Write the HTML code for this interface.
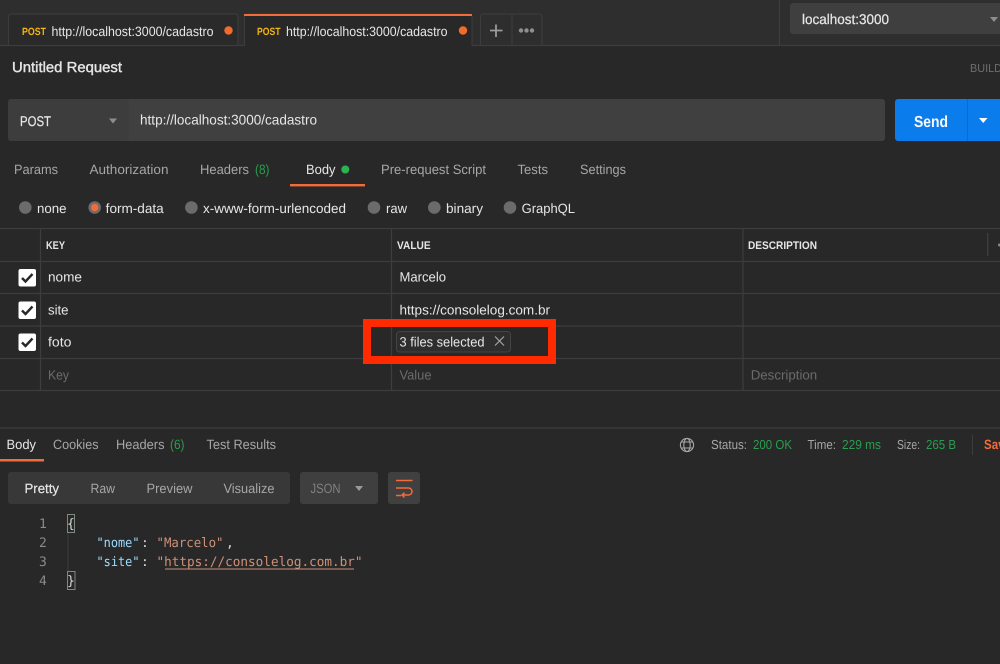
<!DOCTYPE html>
<html><head><meta charset="utf-8"><title>Postman</title>
<style>
html,body{margin:0;padding:0;background:#282828;width:1000px;height:664px;overflow:hidden}
svg{display:block;text-rendering:geometricPrecision}
text{font-family:"Liberation Sans",sans-serif;font-size:13.5px;fill:#a6a6a6;white-space:pre}
.w{fill:#e6e6e6}
.s{stroke:#e6e6e6;stroke-width:.25}
.g{fill:#2a9d4f}
.p{fill:#6b6b6b}
.b{font-weight:bold}
.m{font-family:"DejaVu Sans Mono",monospace;font-size:13px}
.l{stroke:#3d3d3d;stroke-width:1.2;fill:none}
</style></head><body>
<svg width="1000" height="664" viewBox="0 0 1000 664" xmlns="http://www.w3.org/2000/svg">
<rect width="1000" height="664" fill="#282828"/>
<rect width="1000" height="45" fill="#2e2e2e"/>
<path class="l" d="M0 45.5H244M472 45.5H1000M779.5 0V45"/>
<!-- tabs -->
<path d="M8.5 45V17q0-3 3-3H235q3 0 3 3V45" fill="#2a2a2a" stroke="#3d3d3d"/>
<path d="M244.5 46V17q0-3 3-3H469q3 0 3 3V46" fill="#282828" stroke="#3d3d3d"/>
<rect x="244" y="14" width="228" height="2" fill="#f26b3a"/>
<path d="M480.5 45V17q0-3 3-3H539q3 0 3 3V45M512 14V45" fill="#2e2e2e" stroke="#3d3d3d"/>
<text x="22" y="35" textLength="24" lengthAdjust="spacingAndGlyphs" class="b" style="font-size:10.5px;fill:#f6b50e">POST</text>
<text x="51.5" y="36" textLength="162" lengthAdjust="spacingAndGlyphs" class="w">http://localhost:3000/cadastro</text>
<circle cx="228.5" cy="30.5" r="4.2" fill="#f26b2a"/>
<text x="257" y="35" textLength="23.5" lengthAdjust="spacingAndGlyphs" class="b" style="font-size:10.5px;fill:#f6b50e">POST</text>
<text x="286" y="36" textLength="161.5" lengthAdjust="spacingAndGlyphs" class="w">http://localhost:3000/cadastro</text>
<circle cx="463" cy="30.5" r="4.2" fill="#f26b2a"/>
<path d="M496 24.5V37M490 30.5H502.5" stroke="#9a9a9a" stroke-width="1.8"/>
<g fill="#8f8f8f"><circle cx="521" cy="30.5" r="2.2"/><circle cx="526.5" cy="30.5" r="2.2"/><circle cx="532" cy="30.5" r="2.2"/></g>
<!-- env -->
<rect x="790" y="3" width="215" height="31" rx="3" fill="#3f3f3f"/>
<text x="802" y="24" textLength="87" lengthAdjust="spacingAndGlyphs" class="w s" style="font-size:14px">localhost:3000</text>
<path d="M990 17H998L994 22Z" fill="#8d8d8d"/>
<text x="970" y="72" textLength="32" lengthAdjust="spacingAndGlyphs" style="font-size:11.5px;fill:#6e6e6e">BUILD</text>
<text x="12" y="72" textLength="110" lengthAdjust="spacingAndGlyphs" class="w s" style="font-size:14.5px;stroke-width:.4">Untitled Request</text>
<!-- url bar -->
<rect x="8" y="99" width="877" height="42" rx="3" fill="#404040"/>
<rect x="8" y="99" width="121" height="42" rx="3" fill="#3d3d3d"/>
<text x="20" y="126" textLength="31" lengthAdjust="spacingAndGlyphs" class="w s" style="font-size:14px">POST</text>
<path d="M109 118.5H117L113 123.5Z" fill="#8d8d8d"/>
<text x="140" y="124.5" textLength="177" lengthAdjust="spacingAndGlyphs" class="w" style="font-size:14px">http://localhost:3000/cadastro</text>
<rect x="895" y="99" width="110" height="42" rx="3" fill="#0a7cec"/>
<rect x="967" y="99" width="1" height="42" fill="#0a6cd0"/>
<text x="914" y="127" textLength="34" lengthAdjust="spacingAndGlyphs" class="b" style="font-size:16px;fill:#f5f9ff">Send</text>
<path d="M979 118H987.5L983.2 123Z" fill="#fff"/>
<!-- request tabs -->
<text x="14" y="174" textLength="44" lengthAdjust="spacingAndGlyphs">Params</text>
<text x="89.5" y="174" textLength="79" lengthAdjust="spacingAndGlyphs">Authorization</text>
<text x="200" y="174" textLength="49" lengthAdjust="spacingAndGlyphs">Headers</text>
<text x="255" y="174" textLength="14.5" lengthAdjust="spacingAndGlyphs" class="g">(8)</text>
<text x="306" y="174" textLength="29.5" lengthAdjust="spacingAndGlyphs" class="w">Body</text>
<circle cx="345.3" cy="169.5" r="4" fill="#2cb34f"/>
<rect x="290" y="184" width="75" height="2.4" fill="#f26b3a"/>
<text x="381" y="174" textLength="105" lengthAdjust="spacingAndGlyphs">Pre-request Script</text>
<text x="517.5" y="174" textLength="30.5" lengthAdjust="spacingAndGlyphs">Tests</text>
<text x="580" y="174" textLength="46" lengthAdjust="spacingAndGlyphs">Settings</text>
<!-- radios -->
<g fill="#6b6b6b">
<circle cx="25.3" cy="207.5" r="6.3"/><circle cx="94.7" cy="207.5" r="6.3"/><circle cx="191.4" cy="207.5" r="6.3"/><circle cx="374" cy="207.5" r="6.3"/><circle cx="434.3" cy="207.5" r="6.3"/><circle cx="510" cy="207.5" r="6.3"/>
</g>
<circle cx="94.7" cy="207.5" r="3.7" fill="#f26b3a"/>
<text x="37" y="213" textLength="29.5" lengthAdjust="spacingAndGlyphs" class="w">none</text>
<text x="105.7" y="213" textLength="58" lengthAdjust="spacingAndGlyphs" class="w">form-data</text>
<text x="203" y="213" textLength="143" lengthAdjust="spacingAndGlyphs" class="w">x-www-form-urlencoded</text>
<text x="386" y="213" textLength="21" lengthAdjust="spacingAndGlyphs" class="w">raw</text>
<text x="446" y="213" textLength="37" lengthAdjust="spacingAndGlyphs" class="w">binary</text>
<text x="521.6" y="213" textLength="53.4" lengthAdjust="spacingAndGlyphs" class="w">GraphQL</text>
<!-- table -->
<path class="l" d="M0 228.5H1000M0 261.5H1000M0 293.5H1000M0 326H1000M0 358.5H1000M0 390.5H1000M40.5 229V390M391.5 229V390M743 229V390"/>
<rect x="987" y="233" width="1.4" height="23" fill="#3d3d3d"/>
<circle cx="999.5" cy="245" r="1.5" fill="#8a8a8a"/>
<text x="46" y="249" textLength="19" lengthAdjust="spacingAndGlyphs" class="b w" style="font-size:11px">KEY</text>
<text x="397" y="249" textLength="33.6" lengthAdjust="spacingAndGlyphs" class="b w" style="font-size:11px">VALUE</text>
<text x="748" y="249" textLength="69" lengthAdjust="spacingAndGlyphs" class="b w" style="font-size:11px">DESCRIPTION</text>
<g>
<rect x="18.5" y="269" width="17.5" height="17.5" rx="2" fill="#fff"/>
<path d="M22 278L25.5 281.5L32.5 274" fill="none" stroke="#282828" stroke-width="2.4"/>
<rect x="18.5" y="301.5" width="17.5" height="17.5" rx="2" fill="#fff"/>
<path d="M22 310.5L25.5 314L32.5 306.5" fill="none" stroke="#282828" stroke-width="2.4"/>
<rect x="18.5" y="333.5" width="17.5" height="17.5" rx="2" fill="#fff"/>
<path d="M22 342.5L25.5 346L32.5 338.5" fill="none" stroke="#282828" stroke-width="2.4"/>
</g>
<text x="48" y="281.5" textLength="34" lengthAdjust="spacingAndGlyphs" class="w">nome</text>
<text x="399.5" y="281.5" textLength="46.5" lengthAdjust="spacingAndGlyphs" class="w">Marcelo</text>
<text x="48" y="314.5" textLength="20.5" lengthAdjust="spacingAndGlyphs" class="w">site</text>
<text x="399.5" y="314.5" textLength="150.5" lengthAdjust="spacingAndGlyphs" class="w">https://consolelog.com.br</text>
<text x="48" y="346.5" textLength="23.4" lengthAdjust="spacingAndGlyphs" class="w">foto</text>
<rect x="396.5" y="331.5" width="114" height="20.5" rx="3" fill="#2e2e2e" stroke="#444"/>
<text x="399.5" y="346.5" textLength="85" lengthAdjust="spacingAndGlyphs" class="w">3 files selected</text>
<path d="M495 336.5L504 345.5M504 336.5L495 345.5" stroke="#a6a6a6" stroke-width="1.2"/>
<text x="48" y="379.5" textLength="21" lengthAdjust="spacingAndGlyphs" class="p">Key</text>
<text x="399.5" y="379.5" textLength="32" lengthAdjust="spacingAndGlyphs" class="p">Value</text>
<text x="750.7" y="379.5" textLength="66.5" lengthAdjust="spacingAndGlyphs" class="p">Description</text>
<rect x="367" y="323" width="185" height="37" fill="none" stroke="#ff2a00" stroke-width="8"/>
<!-- response -->
<path class="l" d="M0 428H1000"/>
<text x="6.5" y="449" textLength="29.5" lengthAdjust="spacingAndGlyphs" class="w">Body</text>
<rect x="0" y="459" width="44" height="2.5" fill="#f26b3a"/>
<text x="53" y="449" textLength="45.5" lengthAdjust="spacingAndGlyphs">Cookies</text>
<text x="116" y="449" textLength="48.5" lengthAdjust="spacingAndGlyphs">Headers</text>
<text x="170" y="449" textLength="14.5" lengthAdjust="spacingAndGlyphs" class="g">(6)</text>
<text x="206.5" y="449" textLength="69.5" lengthAdjust="spacingAndGlyphs">Test Results</text>
<g fill="none" stroke="#a6a6a6" stroke-width="1.1">
<circle cx="687" cy="445" r="6.6"/><ellipse cx="687" cy="445" rx="3.2" ry="6.6"/><path d="M681 442H693M681 448H693"/>
</g>
<text x="711" y="449" textLength="36" lengthAdjust="spacingAndGlyphs" style="font-size:13px">Status:</text>
<text x="753" y="449" textLength="39" lengthAdjust="spacingAndGlyphs" class="g" style="font-size:13px">200 OK</text>
<text x="807.5" y="449" textLength="28.5" lengthAdjust="spacingAndGlyphs" style="font-size:13px">Time:</text>
<text x="842" y="449" textLength="39" lengthAdjust="spacingAndGlyphs" class="g" style="font-size:13px">229 ms</text>
<text x="897" y="449" textLength="23" lengthAdjust="spacingAndGlyphs" style="font-size:13px">Size:</text>
<text x="926" y="449" textLength="30" lengthAdjust="spacingAndGlyphs" class="g" style="font-size:13px">265 B</text>
<rect x="972" y="435" width="1" height="20" fill="#3d3d3d"/>
<text x="984" y="449" textLength="27" lengthAdjust="spacingAndGlyphs" class="b" style="fill:#f26b3a">Save</text>
<rect x="8" y="472" width="282" height="32" rx="3" fill="#383838"/>
<text x="24.5" y="493" textLength="34.5" lengthAdjust="spacingAndGlyphs" class="w s" style="stroke-width:.2">Pretty</text>
<text x="90.5" y="493" textLength="24.5" lengthAdjust="spacingAndGlyphs">Raw</text>
<text x="146.5" y="493" textLength="46" lengthAdjust="spacingAndGlyphs">Preview</text>
<text x="223.5" y="493" textLength="51" lengthAdjust="spacingAndGlyphs">Visualize</text>
<rect x="300" y="472" width="78" height="32" rx="3" fill="#3f3f3f"/>
<text x="310.5" y="493" textLength="30" lengthAdjust="spacingAndGlyphs" style="fill:#808080">JSON</text>
<path d="M355 486H363L359 491Z" fill="#9a9a9a"/>
<rect x="388" y="472" width="32" height="32" rx="3" fill="#404040"/>
<path d="M396 480.5H412.5M396 488H408.5a3.3 3.3 0 0 1 0 7H402.5M396 495.5H401M404.5 492.7L402 495L404.5 497.5" fill="none" stroke="#f26b3a" stroke-width="1.5"/>
<!-- code -->
<text class="m" x="39" y="528" style="fill:#8a8a8a">1</text>
<text class="m" x="39" y="547" style="fill:#8a8a8a">2</text>
<text class="m" x="39" y="566" style="fill:#8a8a8a">3</text>
<text class="m" x="39" y="585" style="fill:#8a8a8a">4</text>
<path d="M68 533V571" stroke="#3d3d3d"/>
<rect x="67.5" y="514.5" width="7" height="18" fill="none" stroke="#7c8a80"/>
<rect x="67.5" y="571.5" width="7.5" height="18" fill="none" stroke="#7c8a80"/>
<text class="m" x="67" y="528" style="fill:#d8d8d8">{</text>
<text class="m" x="96.5" y="547" textLength="43" lengthAdjust="spacingAndGlyphs" style="fill:#9cdcfe">"nome"</text>
<text class="m" x="141" y="547" style="fill:#d8d8d8">:</text>
<text class="m" x="156.5" y="547" textLength="67" lengthAdjust="spacingAndGlyphs" style="fill:#ce9178">"Marcelo"</text>
<text class="m" x="226" y="547" style="fill:#d8d8d8">,</text>
<text class="m" x="96.5" y="566" textLength="43" lengthAdjust="spacingAndGlyphs" style="fill:#9cdcfe">"site"</text>
<text class="m" x="141" y="566" style="fill:#d8d8d8">:</text>
<text class="m" x="156.5" y="566" textLength="206" lengthAdjust="spacingAndGlyphs" style="fill:#ce9178">"https://consolelog.com.br"</text>
<path d="M165 569H354" stroke="#ce9178"/>
<text class="m" x="67" y="585" style="fill:#d8d8d8">}</text>
</svg>
</body></html>
